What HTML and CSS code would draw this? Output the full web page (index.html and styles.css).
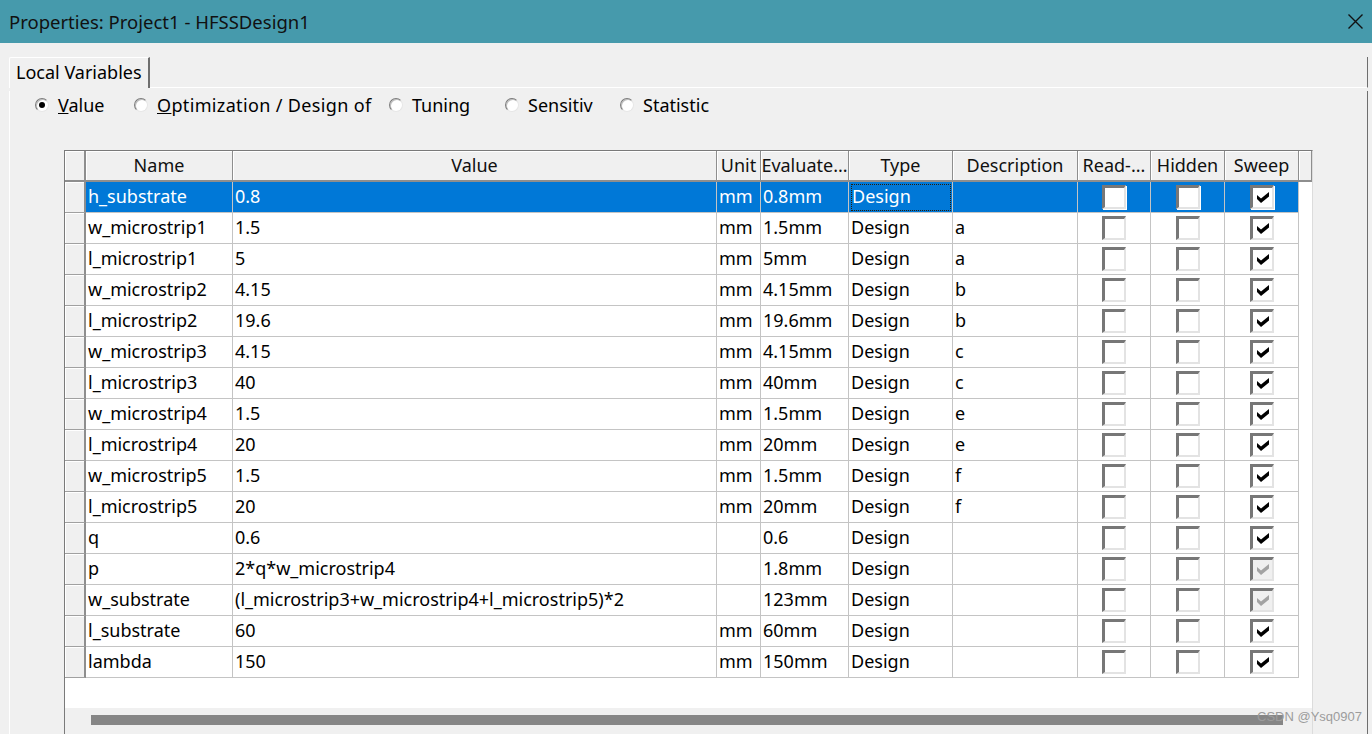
FILE: index.html
```html
<!DOCTYPE html>
<html>
<head>
<meta charset="utf-8">
<title>Properties: Project1 - HFSSDesign1</title>
<link rel="stylesheet" href="styles.css">
</head>
<body>
<div class="titlebar">
  <span class="title">Properties: Project1 - HFSSDesign1</span>
  <svg class="close" width="15" height="15" viewBox="0 0 15 15"><path d="M0.5 0.5 L14.5 14.5 M14.5 0.5 L0.5 14.5" stroke="#111" stroke-width="1.4" fill="none"/></svg>
</div>
<div class="tabstrip">
  <div class="tab">Local Variables</div>
  <div class="tabfill"></div>
</div>
<div class="panel">
  <div class="radios">
    <label class="opt w1"><span class="radio on"></span><span class="rl"><u>V</u>alue</span></label>
    <label class="opt w2"><span class="radio"></span><span class="rl"><u>O</u>ptimization / Design of</span></label>
    <label class="opt w3"><span class="radio"></span><span class="rl">Tuning</span></label>
    <label class="opt w4"><span class="radio"></span><span class="rl">Sensitiv</span></label>
    <label class="opt w5"><span class="radio"></span><span class="rl">Statistic</span></label>
  </div>
  <div class="frame">
    <div class="row head">
      <div class="h"></div><div class="h">Name</div><div class="h">Value</div><div class="h">Unit</div><div class="h">Evaluate...</div><div class="h">Type</div><div class="h">Description</div><div class="h">Read-...</div><div class="h">Hidden</div><div class="h">Sweep</div><div class="h"></div>
    </div>
    <div class="row active">
      <div class="sel"></div><div class="c">h_substrate</div><div class="c">0.8</div><div class="c">mm</div><div class="c">0.8mm</div><div class="c focus">Design</div><div class="c"></div>
      <div class="c ck"><span class="cb"></span></div><div class="c ck"><span class="cb"></span></div><div class="c ck"><span class="cb"><svg width="12" height="11" viewBox="0 0 12 11"><polygon points="0,3 4,6.5 12,0 12,4.5 4,11 0,7"/></svg></span></div><div class="stub"></div>
    </div>
    <div class="row">
      <div class="sel"></div><div class="c">w_microstrip1</div><div class="c">1.5</div><div class="c">mm</div><div class="c">1.5mm</div><div class="c">Design</div><div class="c">a</div>
      <div class="c ck"><span class="cb"></span></div><div class="c ck"><span class="cb"></span></div><div class="c ck"><span class="cb"><svg width="12" height="11" viewBox="0 0 12 11"><polygon points="0,3 4,6.5 12,0 12,4.5 4,11 0,7"/></svg></span></div><div class="stub"></div>
    </div>
    <div class="row">
      <div class="sel"></div><div class="c">l_microstrip1</div><div class="c">5</div><div class="c">mm</div><div class="c">5mm</div><div class="c">Design</div><div class="c">a</div>
      <div class="c ck"><span class="cb"></span></div><div class="c ck"><span class="cb"></span></div><div class="c ck"><span class="cb"><svg width="12" height="11" viewBox="0 0 12 11"><polygon points="0,3 4,6.5 12,0 12,4.5 4,11 0,7"/></svg></span></div><div class="stub"></div>
    </div>
    <div class="row">
      <div class="sel"></div><div class="c">w_microstrip2</div><div class="c">4.15</div><div class="c">mm</div><div class="c">4.15mm</div><div class="c">Design</div><div class="c">b</div>
      <div class="c ck"><span class="cb"></span></div><div class="c ck"><span class="cb"></span></div><div class="c ck"><span class="cb"><svg width="12" height="11" viewBox="0 0 12 11"><polygon points="0,3 4,6.5 12,0 12,4.5 4,11 0,7"/></svg></span></div><div class="stub"></div>
    </div>
    <div class="row">
      <div class="sel"></div><div class="c">l_microstrip2</div><div class="c">19.6</div><div class="c">mm</div><div class="c">19.6mm</div><div class="c">Design</div><div class="c">b</div>
      <div class="c ck"><span class="cb"></span></div><div class="c ck"><span class="cb"></span></div><div class="c ck"><span class="cb"><svg width="12" height="11" viewBox="0 0 12 11"><polygon points="0,3 4,6.5 12,0 12,4.5 4,11 0,7"/></svg></span></div><div class="stub"></div>
    </div>
    <div class="row">
      <div class="sel"></div><div class="c">w_microstrip3</div><div class="c">4.15</div><div class="c">mm</div><div class="c">4.15mm</div><div class="c">Design</div><div class="c">c</div>
      <div class="c ck"><span class="cb"></span></div><div class="c ck"><span class="cb"></span></div><div class="c ck"><span class="cb"><svg width="12" height="11" viewBox="0 0 12 11"><polygon points="0,3 4,6.5 12,0 12,4.5 4,11 0,7"/></svg></span></div><div class="stub"></div>
    </div>
    <div class="row">
      <div class="sel"></div><div class="c">l_microstrip3</div><div class="c">40</div><div class="c">mm</div><div class="c">40mm</div><div class="c">Design</div><div class="c">c</div>
      <div class="c ck"><span class="cb"></span></div><div class="c ck"><span class="cb"></span></div><div class="c ck"><span class="cb"><svg width="12" height="11" viewBox="0 0 12 11"><polygon points="0,3 4,6.5 12,0 12,4.5 4,11 0,7"/></svg></span></div><div class="stub"></div>
    </div>
    <div class="row">
      <div class="sel"></div><div class="c">w_microstrip4</div><div class="c">1.5</div><div class="c">mm</div><div class="c">1.5mm</div><div class="c">Design</div><div class="c">e</div>
      <div class="c ck"><span class="cb"></span></div><div class="c ck"><span class="cb"></span></div><div class="c ck"><span class="cb"><svg width="12" height="11" viewBox="0 0 12 11"><polygon points="0,3 4,6.5 12,0 12,4.5 4,11 0,7"/></svg></span></div><div class="stub"></div>
    </div>
    <div class="row">
      <div class="sel"></div><div class="c">l_microstrip4</div><div class="c">20</div><div class="c">mm</div><div class="c">20mm</div><div class="c">Design</div><div class="c">e</div>
      <div class="c ck"><span class="cb"></span></div><div class="c ck"><span class="cb"></span></div><div class="c ck"><span class="cb"><svg width="12" height="11" viewBox="0 0 12 11"><polygon points="0,3 4,6.5 12,0 12,4.5 4,11 0,7"/></svg></span></div><div class="stub"></div>
    </div>
    <div class="row">
      <div class="sel"></div><div class="c">w_microstrip5</div><div class="c">1.5</div><div class="c">mm</div><div class="c">1.5mm</div><div class="c">Design</div><div class="c">f</div>
      <div class="c ck"><span class="cb"></span></div><div class="c ck"><span class="cb"></span></div><div class="c ck"><span class="cb"><svg width="12" height="11" viewBox="0 0 12 11"><polygon points="0,3 4,6.5 12,0 12,4.5 4,11 0,7"/></svg></span></div><div class="stub"></div>
    </div>
    <div class="row">
      <div class="sel"></div><div class="c">l_microstrip5</div><div class="c">20</div><div class="c">mm</div><div class="c">20mm</div><div class="c">Design</div><div class="c">f</div>
      <div class="c ck"><span class="cb"></span></div><div class="c ck"><span class="cb"></span></div><div class="c ck"><span class="cb"><svg width="12" height="11" viewBox="0 0 12 11"><polygon points="0,3 4,6.5 12,0 12,4.5 4,11 0,7"/></svg></span></div><div class="stub"></div>
    </div>
    <div class="row">
      <div class="sel"></div><div class="c">q</div><div class="c">0.6</div><div class="c"></div><div class="c">0.6</div><div class="c">Design</div><div class="c"></div>
      <div class="c ck"><span class="cb"></span></div><div class="c ck"><span class="cb"></span></div><div class="c ck"><span class="cb"><svg width="12" height="11" viewBox="0 0 12 11"><polygon points="0,3 4,6.5 12,0 12,4.5 4,11 0,7"/></svg></span></div><div class="stub"></div>
    </div>
    <div class="row">
      <div class="sel"></div><div class="c">p</div><div class="c">2*q*w_microstrip4</div><div class="c"></div><div class="c">1.8mm</div><div class="c">Design</div><div class="c"></div>
      <div class="c ck"><span class="cb"></span></div><div class="c ck"><span class="cb"></span></div><div class="c ck"><span class="cb dis"><svg width="12" height="11" viewBox="0 0 12 11"><polygon points="0,3 4,6.5 12,0 12,4.5 4,11 0,7"/></svg></span></div><div class="stub"></div>
    </div>
    <div class="row">
      <div class="sel"></div><div class="c">w_substrate</div><div class="c">(l_microstrip3+w_microstrip4+l_microstrip5)*2</div><div class="c"></div><div class="c">123mm</div><div class="c">Design</div><div class="c"></div>
      <div class="c ck"><span class="cb"></span></div><div class="c ck"><span class="cb"></span></div><div class="c ck"><span class="cb dis"><svg width="12" height="11" viewBox="0 0 12 11"><polygon points="0,3 4,6.5 12,0 12,4.5 4,11 0,7"/></svg></span></div><div class="stub"></div>
    </div>
    <div class="row">
      <div class="sel"></div><div class="c">l_substrate</div><div class="c">60</div><div class="c">mm</div><div class="c">60mm</div><div class="c">Design</div><div class="c"></div>
      <div class="c ck"><span class="cb"></span></div><div class="c ck"><span class="cb"></span></div><div class="c ck"><span class="cb"><svg width="12" height="11" viewBox="0 0 12 11"><polygon points="0,3 4,6.5 12,0 12,4.5 4,11 0,7"/></svg></span></div><div class="stub"></div>
    </div>
    <div class="row">
      <div class="sel"></div><div class="c">lambda</div><div class="c">150</div><div class="c">mm</div><div class="c">150mm</div><div class="c">Design</div><div class="c"></div>
      <div class="c ck"><span class="cb"></span></div><div class="c ck"><span class="cb"></span></div><div class="c ck"><span class="cb"><svg width="12" height="11" viewBox="0 0 12 11"><polygon points="0,3 4,6.5 12,0 12,4.5 4,11 0,7"/></svg></span></div><div class="stub"></div>
    </div>
    <div class="blank"></div>
    <div class="hscroll"><div class="thumb"></div></div>
  </div>
</div>
<div class="watermark">CSDN @Ysq0907</div>
</body>
</html>
```
FILE: styles.css
```css
html, body {
  margin: 0;
  padding: 0;
}
body {
  width: 1372px;
  height: 734px;
  overflow: hidden;
  background: #f0f0f0;
  font-family: "Noto Sans", "Open Sans", sans-serif;
  font-size: 18px;
  color: #000;
}
.titlebar {
  height: 43px;
  background: #469aac;
  display: flex;
  align-items: center;
  justify-content: space-between;
  padding: 0 9px 0 9px;
  box-sizing: border-box;
}
.title {
  color: #111;
  font-size: 18.5px;
  line-height: 43px;
}
.close {
  display: block;
}
.tabstrip {
  display: flex;
  margin: 14px 0 0 9px;
  width: 1359px;
  height: 31px;
}
.tab {
  box-sizing: border-box;
  height: 31px;
  padding: 0 6px 0 6px;
  line-height: 29px;
  border-top: 1px solid #fff;
  border-left: 1px solid #fff;
  border-right: 2px solid #6e6e6e;
  border-top-left-radius: 2px;
  white-space: nowrap;
}
.tabfill {
  flex: 1;
  border-bottom: 1px solid #fff;
  border-right: 1px solid #6e6e6e;
  box-sizing: border-box;
  height: 31px;
}
.panel {
  margin-left: 9px;
  width: 1359px;
  height: 646px;
  box-sizing: border-box;
  border-left: 1px solid #fff;
  border-right: 1px solid #6e6e6e;
}
.radios {
  display: flex;
  height: 28px;
  margin-top: 3px;
  padding-left: 25px;
  align-items: center;
}
.opt {
  display: flex;
  align-items: center;
  gap: 9px;
  white-space: nowrap;
}
.w1 { width: 99px; }
.w2 { width: 255px; }
.w3 { width: 116px; }
.w4 { width: 115px; }
.w5 { width: 88px; }
.rl {
  line-height: 28px;
}
.w2 .rl {
  letter-spacing: 0.35px;
}
.radio {
  width: 14px;
  height: 14px;
  box-sizing: border-box;
  border-radius: 50%;
  background: #fff;
  border: 1px solid;
  border-color: #7c7c7c #e6e6e6 #e6e6e6 #7c7c7c;
  box-shadow: inset 1px 1px 0 #bdbdbd;
  display: flex;
  align-items: center;
  justify-content: center;
  flex: none;
}
.radio.on::after {
  content: "";
  width: 6px;
  height: 6px;
  border-radius: 50%;
  background: #000;
}
.frame {
  margin: 31px 0 0 54px;
  width: 1249px;
  height: 584px;
  box-sizing: border-box;
  border-left: 1px solid #7a7a7a;
  border-top: 1px solid #7a7a7a;
  border-right: 1px solid #dcdcdc;
  background: #fff;
}
.row {
  display: grid;
  grid-template-columns: 21px 147px 484px 44px 88px 104px 125px 73px 74px 74px 13px;
  height: 31px;
}
.row > div {
  box-sizing: border-box;
  height: 31px;
  overflow: hidden;
  white-space: nowrap;
}
.h {
  background: #f0f0f0;
  border-right: 1px solid #8e8e8e;
  border-bottom: 2px solid #8e8e8e;
  box-shadow: inset 1px 1px 0 #fff;
  text-align: center;
  line-height: 29px;
  color: #111;
}
.head .h:first-child {
  border-right: 2px solid #8e8e8e;
}
.sel {
  background: #f0f0f0;
  border-right: 2px solid #8e8e8e;
  border-bottom: 1px solid #a0a0a0;
  box-shadow: inset 1px 1px 0 #fff;
}
.c {
  border-right: 1px solid #c4c4c4;
  border-bottom: 1px solid #c4c4c4;
  padding: 0 2px 0 2px;
  line-height: 29px;
}
.stub {
  background: #fff;
}
.active .c {
  background: #0078d7;
  color: #fff;
}
.active .focus {
  outline: 1px dotted #2b1d08;
  outline-offset: -3px;
  padding-left: 3px;
}
.c.ck {
  display: flex;
  align-items: center;
  justify-content: center;
  padding: 0;
}
.cb {
  width: 24px;
  height: 24px;
  box-sizing: border-box;
  border-style: solid;
  border-width: 3px 2px 2px 3px;
  border-color: #777 #e3e3e3 #e3e3e3 #777;
  background: #fff;
  box-shadow: 1px 1px 0 #fff;
  display: flex;
  align-items: center;
  justify-content: center;
  padding: 0 0 0 1px;
}
.cb svg {
  display: block;
  fill: #000;
}
.cb.dis {
  background: #f0f0f0;
}
.cb.dis svg {
  fill: #a3a3a3;
}
.blank {
  height: 30px;
  background: #fff;
}
.hscroll {
  height: 26px;
  background: #f0f0f0;
  padding: 7px 0 0 26px;
  box-sizing: border-box;
}
.thumb {
  width: 1192px;
  height: 10px;
  background: #868686;
}
.watermark {
  position: absolute;
  left: 1257px;
  top: 709px;
  font-family: "Liberation Sans", Arial, sans-serif;
  font-size: 13px;
  color: #9c9c9c;
}
```
